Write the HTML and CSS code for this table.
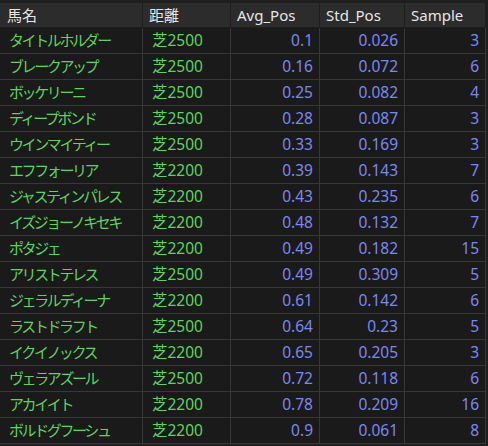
FILE: index.html
```html
<!DOCTYPE html>
<html lang="ja">
<head>
<meta charset="utf-8">
<link rel="stylesheet" href="styles.css">
</head>
<body>
<div class="table">
  <div class="row head">
    <div class="c c1">馬名</div><div class="c c2">距離</div><div class="c c3">Avg_Pos</div><div class="c c4">Std_Pos</div><div class="c c5">Sample</div>
  </div>
  <div class="row"><div class="c c1 g">タイトルホルダー</div><div class="c c2 g">芝2500</div><div class="c c3 n">0.1</div><div class="c c4 n">0.026</div><div class="c c5 n">3</div></div>
  <div class="row"><div class="c c1 g">ブレークアップ</div><div class="c c2 g">芝2500</div><div class="c c3 n">0.16</div><div class="c c4 n">0.072</div><div class="c c5 n">6</div></div>
  <div class="row"><div class="c c1 g">ボッケリーニ</div><div class="c c2 g">芝2500</div><div class="c c3 n">0.25</div><div class="c c4 n">0.082</div><div class="c c5 n">4</div></div>
  <div class="row"><div class="c c1 g">ディープボンド</div><div class="c c2 g">芝2500</div><div class="c c3 n">0.28</div><div class="c c4 n">0.087</div><div class="c c5 n">3</div></div>
  <div class="row"><div class="c c1 g">ウインマイティー</div><div class="c c2 g">芝2500</div><div class="c c3 n">0.33</div><div class="c c4 n">0.169</div><div class="c c5 n">3</div></div>
  <div class="row"><div class="c c1 g">エフフォーリア</div><div class="c c2 g">芝2200</div><div class="c c3 n">0.39</div><div class="c c4 n">0.143</div><div class="c c5 n">7</div></div>
  <div class="row"><div class="c c1 g">ジャスティンパレス</div><div class="c c2 g">芝2200</div><div class="c c3 n">0.43</div><div class="c c4 n">0.235</div><div class="c c5 n">6</div></div>
  <div class="row"><div class="c c1 g">イズジョーノキセキ</div><div class="c c2 g">芝2200</div><div class="c c3 n">0.48</div><div class="c c4 n">0.132</div><div class="c c5 n">7</div></div>
  <div class="row"><div class="c c1 g">ポタジェ</div><div class="c c2 g">芝2200</div><div class="c c3 n">0.49</div><div class="c c4 n">0.182</div><div class="c c5 n">15</div></div>
  <div class="row"><div class="c c1 g">アリストテレス</div><div class="c c2 g">芝2500</div><div class="c c3 n">0.49</div><div class="c c4 n">0.309</div><div class="c c5 n">5</div></div>
  <div class="row"><div class="c c1 g">ジェラルディーナ</div><div class="c c2 g">芝2200</div><div class="c c3 n">0.61</div><div class="c c4 n">0.142</div><div class="c c5 n">6</div></div>
  <div class="row"><div class="c c1 g">ラストドラフト</div><div class="c c2 g">芝2500</div><div class="c c3 n">0.64</div><div class="c c4 n">0.23</div><div class="c c5 n">5</div></div>
  <div class="row"><div class="c c1 g">イクイノックス</div><div class="c c2 g">芝2200</div><div class="c c3 n">0.65</div><div class="c c4 n">0.205</div><div class="c c5 n">3</div></div>
  <div class="row"><div class="c c1 g">ヴェラアズール</div><div class="c c2 g">芝2500</div><div class="c c3 n">0.72</div><div class="c c4 n">0.118</div><div class="c c5 n">6</div></div>
  <div class="row"><div class="c c1 g">アカイイト</div><div class="c c2 g">芝2200</div><div class="c c3 n">0.78</div><div class="c c4 n">0.209</div><div class="c c5 n">16</div></div>
  <div class="row"><div class="c c1 g">ボルドグフーシュ</div><div class="c c2 g">芝2200</div><div class="c c3 n">0.9</div><div class="c c4 n">0.061</div><div class="c c5 n">8</div></div>
</div>
</body>
</html>
```

FILE: styles.css
```css
html, body {
  margin: 0;
  padding: 0;
  background: #1e1e1e;
}
body {
  width: 488px;
  height: 446px;
  overflow: hidden;
  font-family: "Noto Sans", "Noto Sans CJK JP", sans-serif;
  font-size: 15px;
}
.table {
  width: 486px;
  padding-top: 3px;
}
.row {
  display: grid;
  grid-template-columns: 143px 88px 89px 85px 81px;
  height: 26px;
  border-bottom: 1px solid #383838;
  box-sizing: border-box;
  background: #1a1a1a;
}
.c {
  border-right: 1px solid #383838;
  display: flex;
  align-items: center;
  padding: 0 6px 0 9px;
  white-space: nowrap;
  overflow: hidden;
  line-height: 1;
}
.head {
  height: 25px;
  background: #2c2c2c;
  border-bottom: 1px solid #1e1e1e;
}
.head .c {
  color: #e6e6e6;
  border-right: 1px solid #1e1e1e;
  padding-left: 6px;
}
.head .c1 { padding-left: 7px; }
.c1.g { letter-spacing: -2.4px; }
.c2.g { font-size: 15.5px; }
.g { color: #5fd35f; }
.n {
  color: #7d87f0;
  justify-content: flex-end;
  font-size: 15.5px;
}
.c5.n { padding-right: 6px; }
```
